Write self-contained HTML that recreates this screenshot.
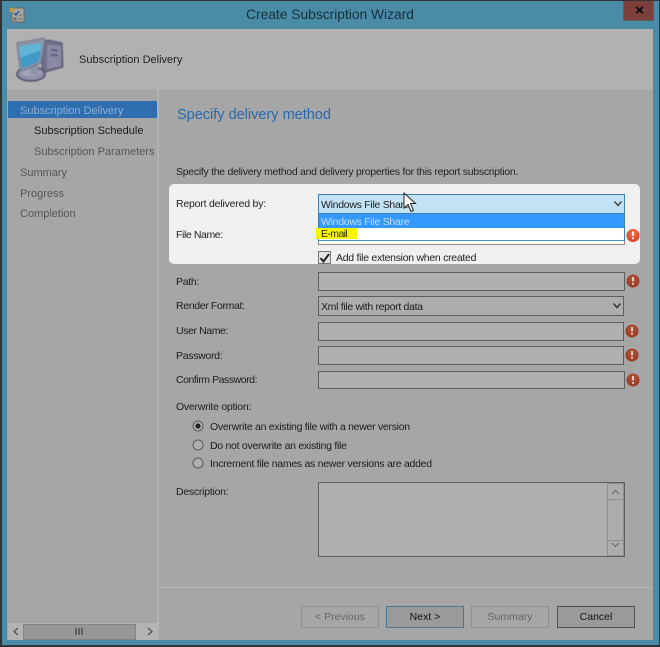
<!DOCTYPE html>
<html><head><meta charset="utf-8">
<style>
html,body{margin:0;padding:0;width:660px;height:647px;overflow:hidden;background:#4a8ba6}
body{position:relative;font-family:"Liberation Sans",sans-serif;font-size:10.5px;color:#1c1c1c}
div,svg{position:absolute;box-sizing:border-box}
.t{white-space:nowrap;line-height:14px;filter:blur(.35px);letter-spacing:-.28px}
.s{font-size:11px;letter-spacing:0}
.box{background:#b0b0b0;border:1px solid #5e5e5e}
.btn{top:606px;height:22px;width:78px;text-align:center;line-height:20px;border:1px solid #808080;background:#a6a6a6;filter:blur(.3px)}
</style></head><body>
<div style="left:0;top:0;width:660px;height:1px;background:#333"></div>
<div style="left:0;top:0;width:2px;height:647px;background:#333"></div>
<div style="left:659px;top:0;width:1px;height:647px;background:#333"></div>
<div style="left:0;top:645px;width:660px;height:2px;background:#333"></div>
<!-- title icon -->
<svg style="left:9px;top:6px" width="16" height="17" viewBox="0 0 16 17"><rect x="3" y="2" width="12" height="14" fill="#a9a69c" stroke="#6d6a60"/><path d="M5 7l2 2 3-4" stroke="#1b4e9a" stroke-width="1.3" fill="none"/><path d="M10 9h3M5 12h2v2H5zM9 13h4" stroke="#666" fill="none"/><circle cx="3" cy="4" r="2.5" fill="#c59a35"/></svg>
<div class="t" style="left:0;width:660px;top:7px;text-align:center;font-size:13.8px;line-height:16px;color:#17303c;letter-spacing:0">Create Subscription Wizard</div>
<div style="left:623px;top:1px;width:31px;height:20px;background:#7d3f3a;border:1px solid #5e5e5e;border-top:0"></div>
<svg style="left:635px;top:6px" width="9" height="8" viewBox="0 0 9 8"><path d="M1.200 1l6.600 6M7.800 1L1.200 7" stroke="#111" stroke-width="2"/></svg>

<!-- client -->
<div style="left:7px;top:29px;width:646px;height:611px;background:#a6a6a6"></div>
<div style="left:7px;top:29px;width:646px;height:61px;background:#b1b1b1"></div>
<!-- computer icon -->
<svg style="left:0;top:0;filter:blur(.4px)" width="80" height="90" viewBox="0 0 80 90">
<path d="M42 43l6-3 14 3 1 24-21 6z" fill="#6f6f8c" stroke="#55556e"/>
<path d="M47 44l14 2 0 20-14 3z" fill="#8a8aa5"/>
<path d="M51 49l7 .5v2l-7-.5zM51 54l7 .5v2l-7-.5z" fill="#5f5f7c"/>
<ellipse cx="31" cy="74" rx="14" ry="7" fill="#9090a8" stroke="#4f4f6a" stroke-width="1.6"/>
<ellipse cx="31" cy="72.500" rx="10" ry="4" fill="#a2a2b6"/>
<path d="M29 62l9-1 1 13-8 1z" fill="#8b93a8"/>
<path d="M17 43l27-5 1 2-4 23-19 8-2-2z" fill="#8c94a6" stroke="#71778a"/>
<path d="M19 46l23-3-3 18-17 8z" fill="#3f98c6"/>
<path d="M19 46l23-3-1 7-21 8z" fill="#62b4d8"/>
</svg>
<div class="t s" style="left:79px;top:53px;color:#222">Subscription Delivery</div>

<!-- sidebar -->
<div style="left:157px;top:90px;width:2px;height:550px;background:#b2b2b2"></div>
<div style="left:8px;top:101px;width:149px;height:17px;background:#2f6eaf"></div>
<div class="t s" style="left:20px;top:104px;color:#8eb0d4">Subscription Delivery</div>
<div class="t s" style="left:34px;top:124px;color:#1a1a1a">Subscription Schedule</div>
<div class="t s" style="left:34px;top:145px;color:#565656">Subscription Parameters</div>
<div class="t s" style="left:20px;top:166px;color:#565656">Summary</div>
<div class="t s" style="left:20px;top:187px;color:#565656">Progress</div>
<div class="t s" style="left:20px;top:207px;color:#565656">Completion</div>
<!-- sidebar scrollbar -->
<div style="left:8px;top:623px;width:149px;height:17px;background:#b4b4b4"></div>
<div style="left:23px;top:624px;width:113px;height:16px;background:#979797;border:1px solid #858585"></div>
<svg style="left:8px;top:623px" width="149" height="17" viewBox="0 0 149 17"><path d="M10 5l-4 3.5 4 3.5M140 5l4 3.5-4 3.5" stroke="#555" stroke-width="1.3" fill="none"/><path d="M68 5v7M71 5v7M74 5v7" stroke="#444" stroke-width="1.3"/></svg>

<!-- main -->
<div class="t" style="left:177px;top:107px;font-size:14.5px;line-height:17px;color:#2a68ab;letter-spacing:0">Specify delivery method</div>
<div class="t" style="left:176px;top:165px;color:#222">Specify the delivery method and delivery properties for this report subscription.</div>

<!-- highlight panel -->
<div style="left:169px;top:184px;width:471px;height:80px;background:#f0f0f0;border-radius:5px"></div>
<div class="t" style="left:176px;top:197px;color:#222;letter-spacing:-.2px">Report delivered by:</div>
<div style="left:318px;top:194px;width:307px;height:20px;background:#c3e2f4;border:1px solid #3f7fa8"></div>
<div class="t" style="left:321px;top:198px;color:#222">Windows File Share</div>
<svg style="left:613px;top:200px" width="10" height="8" viewBox="0 0 10 8"><path d="M1.5 1.5l3.5 4 3.5-4" stroke="#444" stroke-width="1.5" fill="none"/></svg>
<div class="t" style="left:176px;top:228px;color:#222;letter-spacing:-.4px">File Name:</div>
<div style="left:318px;top:214px;width:307px;height:31px;background:#fff;border:1px solid #8a8a8a"></div>
<div style="left:318px;top:214px;width:307px;height:14px;background:#3399ff"></div>
<div style="left:318px;top:228px;width:307px;height:13px;background:#fff;border:1px solid #4d94c0;border-top:0"></div>
<div style="left:318px;top:214px;width:1px;height:27px;background:#3f7fa8"></div>
<div style="left:624px;top:214px;width:1px;height:27px;background:#3f7fa8"></div>
<div style="left:316px;top:228px;width:41px;height:11px;background:#f8f500"></div>
<div class="t" style="left:321px;top:215px;color:#c5e0fb">Windows File Share</div>
<div class="t" style="left:321px;top:227px;color:#2a2a00;letter-spacing:-.6px">E-mail</div>
<div style="left:318px;top:251px;width:13px;height:13px;background:#e4e4e4;border:1px solid #777"></div>
<svg style="left:319px;top:252px" width="12" height="12" viewBox="0 0 12 12"><path d="M1.5 6l3 3.5 5.5-7.5" stroke="#222" stroke-width="2" fill="none"/></svg>
<div class="t" style="left:336px;top:251px;color:#222">Add file extension when created</div>

<!-- cursor -->
<svg style="left:403px;top:192px" width="14" height="21" viewBox="0 0 14 21"><path d="M1 1v15l4-3.5 3 7 2.5-1-3-7h5z" fill="#fff" stroke="#222" stroke-width="1"/></svg>

<!-- form -->
<div class="t" style="left:176px;top:275px">Path:</div>
<div class="box" style="left:318px;top:272px;width:307px;height:19px"></div>
<div class="t" style="left:176px;top:299px;letter-spacing:-.35px">Render Format:</div>
<div class="box" style="left:318px;top:296px;width:306px;height:20px;background:#adadad"></div>
<div class="t" style="left:321px;top:300px;letter-spacing:-.32px">Xml file with report data</div>
<svg style="left:612px;top:302px" width="10" height="8" viewBox="0 0 10 8"><path d="M1.5 1.500l3.500 4 3.500-4" stroke="#333" stroke-width="1.4" fill="none"/></svg>
<div class="t" style="left:176px;top:324px;letter-spacing:-.4px">User Name:</div>
<div class="box" style="left:318px;top:322px;width:306px;height:19px"></div>
<div class="t" style="left:176px;top:349px;letter-spacing:-.3px">Password:</div>
<div class="box" style="left:318px;top:346px;width:306px;height:19px"></div>
<div class="t" style="left:176px;top:373px;letter-spacing:-.45px">Confirm Password:</div>
<div class="box" style="left:318px;top:371px;width:307px;height:18px"></div>

<!-- error icons -->
<svg style="left:0;top:0" width="660" height="647" viewBox="0 0 660 647">
<defs><radialGradient id="r" cx=".5" cy=".35" r=".7"><stop offset="0" stop-color="#f47a50"/><stop offset="1" stop-color="#d7361a"/></radialGradient>
<radialGradient id="d" cx=".5" cy=".35" r=".7"><stop offset="0" stop-color="#b5573a"/><stop offset="1" stop-color="#97341e"/></radialGradient></defs>
<g stroke="#fff" stroke-width="1.8">
<circle cx="633" cy="235.500" r="6.500" fill="url(#r)" stroke="none"/><path d="M633 231.500v4.500M633 237.500v1.800"/>
<circle cx="633" cy="281" r="6.500" fill="url(#d)" stroke="none"/><path d="M633 277v4.500M633 283v1.800" stroke="#ddd"/>
<circle cx="632" cy="331" r="6.500" fill="url(#d)" stroke="none"/><path d="M632 327v4.500M632 333v1.800" stroke="#ddd"/>
<circle cx="632" cy="355" r="6.500" fill="url(#d)" stroke="none"/><path d="M632 351v4.500M632 357v1.800" stroke="#ddd"/>
<circle cx="633" cy="380" r="6.500" fill="url(#d)" stroke="none"/><path d="M633 376v4.500M633 382v1.800" stroke="#ddd"/>
</g>
<circle cx="198" cy="426" r="5" fill="#b0b0b0" stroke="#5a5a5a"/><circle cx="198" cy="426" r="2.600" fill="#222"/>
<circle cx="198" cy="445" r="5" fill="#b0b0b0" stroke="#5a5a5a"/>
<circle cx="198" cy="463" r="5" fill="#b0b0b0" stroke="#5a5a5a"/>
</svg>

<div class="t" style="left:176px;top:400px;letter-spacing:-.25px">Overwrite option:</div>
<div class="t" style="left:210px;top:420px">Overwrite an existing file with a newer version</div>
<div class="t" style="left:210px;top:439px">Do not overwrite an existing file</div>
<div class="t" style="left:210px;top:457px">Increment file names as newer versions are added</div>
<div class="t" style="left:176px;top:485px;letter-spacing:-.25px">Description:</div>

<div class="box" style="left:318px;top:482px;width:307px;height:75px"></div>
<div style="left:607px;top:483px;width:17px;height:73px;background:#adadad;border:1px solid #8f8f8f"></div>
<div style="left:608px;top:484px;width:15px;height:16px;border-bottom:1px solid #8f8f8f"></div>
<div style="left:608px;top:540px;width:15px;height:15px;border-top:1px solid #8f8f8f"></div>
<svg style="left:610px;top:488px" width="11" height="62" viewBox="0 0 11 62"><path d="M2 6l3.500-3.500L9 6M2 55l3.500 3.500L9 55" stroke="#666" fill="none"/></svg>

<!-- footer -->
<div style="left:159px;top:587px;width:494px;height:1px;background:#b4b4b4"></div>
<div class="btn" style="left:301px;color:#666;border-color:#8f8f8f">&lt; Previous</div>
<div class="btn" style="left:386px;width:78px;border-color:#4a7896;background:#9a9a9a;color:#111">Next &gt;</div>
<div class="btn" style="left:471px;color:#666;border-color:#8f8f8f">Summary</div>
<div class="btn" style="left:557px;border-color:#4f4f4f;background:#9a9a9a;color:#111">Cancel</div>
</body></html>
